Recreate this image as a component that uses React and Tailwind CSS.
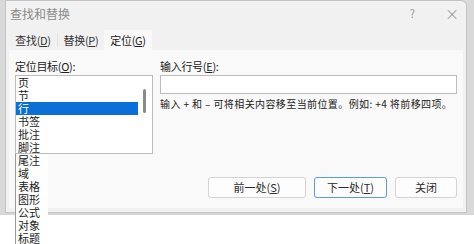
const FONT = { fontFamily: '"Noto Sans CJK SC", "Noto Sans", sans-serif' }

const inBox = ['页', '节', '行', '书签', '批注', '脚注']
const overflow = ['尾注', '域', '表格', '图形', '公式', '对象', '标题']

function Tab({ label, hotkey, active, w }) {
  return (
    <div
      className={`flex h-[20px] items-center justify-center text-[11px] tracking-[-0.3px] ${w} ${
        active ? 'bg-[#f9f9f9] text-[#1a1a1a]' : 'text-[#333]'
      }`}
    >
      {label}(<span className="underline">{hotkey}</span>)
    </div>
  )
}

function Btn({ children, w, primary }) {
  return (
    <button
      className={`flex h-[21px] items-center justify-center rounded-[3px] border bg-[#fdfdfd] text-[11px] text-[#2a2a2a] ${w} ${
        primary ? 'border-[#5b9be0]' : 'border-[#d4d4d4]'
      }`}
    >
      {children}
    </button>
  )
}

export default function App() {
  return (
    <div className="relative h-[244px] w-[474px] overflow-hidden bg-white" style={FONT}>
      <div className="flex h-[213px] bg-[#d9d9d9]">
        <div className="w-[5px]" />
        <div className="flex w-[462px] flex-col rounded-tr-[6px] border border-[#c4c4c4] bg-[#f1f1f1]">
          <div className="flex h-[25px] items-center px-[4px] text-[12px] text-[#8a8a8a]">
            <span>查找和替换</span>
            <span className="ml-auto mr-[30px] text-[11px] text-[#999]">?</span>
            <span className="mr-[3px] text-[14px] font-light text-[#888]">×</span>
          </div>
          <div className="flex h-[24px] items-end pl-[3px]">
            <Tab label="查找" hotkey="D" w="w-[48px]" />
            <div className="mb-[4px] h-[12px] w-px bg-[#e2e2e2]" />
            <Tab label="替换" hotkey="P" w="w-[46px]" />
            <Tab label="定位" hotkey="G" w="w-[48px]" active />
          </div>
          <div className="mx-[3px] flex h-[158px] flex-col bg-[#f9f9f9] pl-[6px] pr-[4px] pt-[9px]">
            <div className="flex gap-[7px]">
              <div className="relative w-[138px]">
                <div className="h-[14px] text-[11px] leading-[14px] tracking-[-0.3px] text-[#222]">
                  定位目标(<span className="underline">O</span>):
                </div>
                <div className="relative mt-[2px] h-[79px] overflow-hidden border border-[#bcbcbc] bg-white">
                  {inBox.map((item) => (
                    <div
                      key={item}
                      className={`h-[13px] w-[122px] pl-[2px] text-[11px] leading-[13px] ${
                        item === '行' ? 'bg-[#0a6fd6] text-white' : 'text-[#222]'
                      }`}
                    >
                      {item}
                    </div>
                  ))}
                  <div className="absolute left-[127px] top-[13px] h-[24px] w-[3px] rounded-full bg-[#8a8a8a]" />
                </div>
                <div className="absolute left-0 top-full w-[33px] border-l border-[#9a9a9a] bg-white">
                  {overflow.map((item) => (
                    <div key={item} className="h-[13px] pl-[2px] text-[11px] leading-[13px] text-[#222]">
                      {item}
                    </div>
                  ))}
                </div>
              </div>
              <div className="flex-1">
                <div className="h-[14px] text-[11px] leading-[14px] tracking-[-0.3px] text-[#222]">
                  输入行号(<span className="underline">E</span>):
                </div>
                <div className="mt-[2px] h-[19px] w-[297px] border border-[#bcbcbc] bg-white" />
                <div className="mt-[3px] whitespace-nowrap text-[10px] leading-[14px] tracking-[0.4px] text-[#222]">
                  输入 + 和 – 可将相关内容移至当前位置。例如: +4 将前移四项。
                </div>
              </div>
            </div>
            <div className="mb-[10px] mt-auto flex justify-end gap-[8px] pr-[2px]">
              <Btn w="w-[98px]">
                前一处(<span className="underline">S</span>)
              </Btn>
              <Btn w="w-[73px]" primary>
                下一处(<span className="underline">T</span>)
              </Btn>
              <Btn w="w-[62px]">关闭</Btn>
            </div>
          </div>
        </div>
        <div className="flex-1" />
      </div>
      <div className="h-[2px] bg-[#d6d6d6]" />
    </div>
  )
}
